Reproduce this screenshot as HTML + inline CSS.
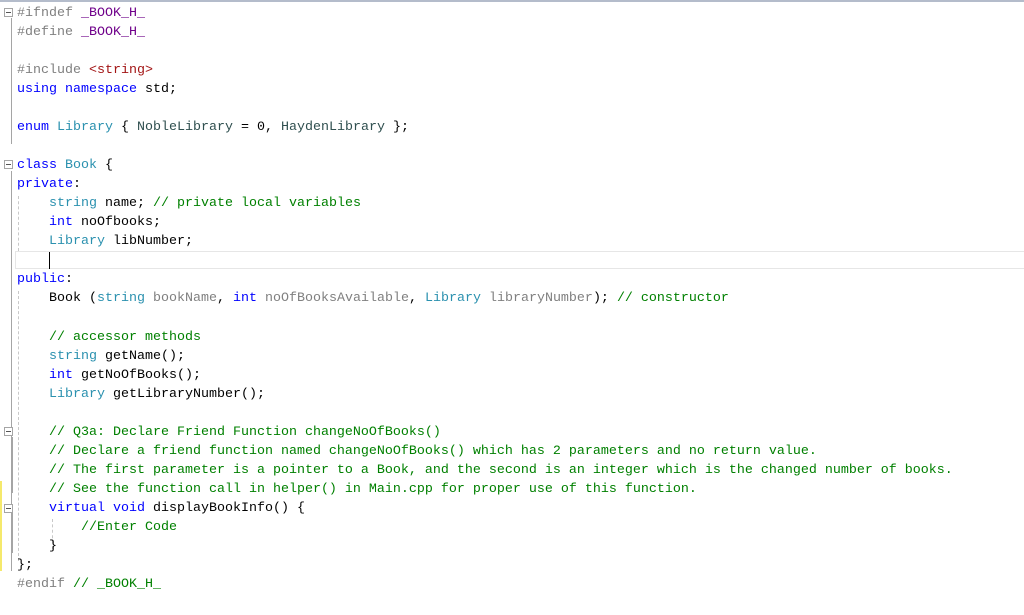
<!DOCTYPE html>
<html><head><meta charset="utf-8"><style>
html,body{margin:0;padding:0;background:#fff;width:1024px;height:615px;overflow:hidden;position:relative}
.top{position:absolute;left:0;top:0;width:1024px;height:2px;background:#b4bccb}
.code{position:absolute;left:17px;top:4px;font-family:"Liberation Mono",monospace;font-size:13.33px;line-height:19.03px;white-space:pre;color:#000}
.k{color:#0000ff}.t{color:#2b91af}.c{color:#008000}.m{color:#6f008a}.p{color:#808080}.s{color:#a31515}.e{color:#2f4f4f}.g{color:#808080}
.cur{position:absolute;left:15px;top:251px;width:1009px;height:18px;border:1px solid #e6e6e6;border-right:none;box-sizing:border-box}
.caret{position:absolute;left:49px;top:252px;width:1px;height:17px;background:#000}
.vl{position:absolute;left:11px;width:1px;background:#a5a5a5}
.fold{position:absolute;left:4px;width:7px;height:7px;border:1px solid #a5a5a5;background:#fff;box-sizing:content-box}
.fold:after{content:"";position:absolute;left:1px;top:3px;width:5px;height:1px;background:#555}
.guide{position:absolute;width:0;border-left:1px dashed #c8c8c8}
.yb{position:absolute;left:0;width:2px;background:#f5e96c}
</style></head><body>
<div class="top"></div>
<div class="cur"></div>
<div class="caret"></div>
<div class="vl" style="top:18px;height:126px"></div>
<div class="vl" style="top:171px;height:400px"></div>
<div class="vl" style="top:437px;height:56px;left:12px"></div>
<div class="vl" style="top:513px;height:40px;left:12px"></div>
<div class="fold" style="top:8px"></div>
<div class="fold" style="top:160px"></div>
<div class="fold" style="top:427px"></div>
<div class="fold" style="top:504px"></div>
<div class="guide" style="left:18px;top:196px;height:55px"></div>
<div class="guide" style="left:18px;top:291px;height:270px"></div>
<div class="guide" style="left:52px;top:519px;height:30px"></div>
<div class="yb" style="top:481px;height:90px"></div>
<div class="code"><span class="p">#ifndef</span> <span class="m">_BOOK_H_</span>
<span class="p">#define</span> <span class="m">_BOOK_H_</span>

<span class="p">#include</span> <span class="s">&lt;string&gt;</span>
<span class="k">using</span> <span class="k">namespace</span> std;

<span class="k">enum</span> <span class="t">Library</span> { <span class="e">NobleLibrary</span> = 0, <span class="e">HaydenLibrary</span> };

<span class="k">class</span> <span class="t">Book</span> {
<span class="k">private</span>:
    <span class="t">string</span> name; <span class="c">// private local variables</span>
    <span class="k">int</span> noOfbooks;
    <span class="t">Library</span> libNumber;

<span class="k">public</span>:
    Book (<span class="t">string</span> <span class="g">bookName</span>, <span class="k">int</span> <span class="g">noOfBooksAvailable</span>, <span class="t">Library</span> <span class="g">libraryNumber</span>); <span class="c">// constructor</span>

    <span class="c">// accessor methods</span>
    <span class="t">string</span> getName();
    <span class="k">int</span> getNoOfBooks();
    <span class="t">Library</span> getLibraryNumber();

    <span class="c">// Q3a: Declare Friend Function changeNoOfBooks()</span>
    <span class="c">// Declare a friend function named changeNoOfBooks() which has 2 parameters and no return value.</span>
    <span class="c">// The first parameter is a pointer to a Book, and the second is an integer which is the changed number of books.</span>
    <span class="c">// See the function call in helper() in Main.cpp for proper use of this function.</span>
    <span class="k">virtual</span> <span class="k">void</span> displayBookInfo() {
        <span class="c">//Enter Code</span>
    }
};
<span class="p">#endif</span> <span class="c">// _BOOK_H_</span></div>
</body></html>
